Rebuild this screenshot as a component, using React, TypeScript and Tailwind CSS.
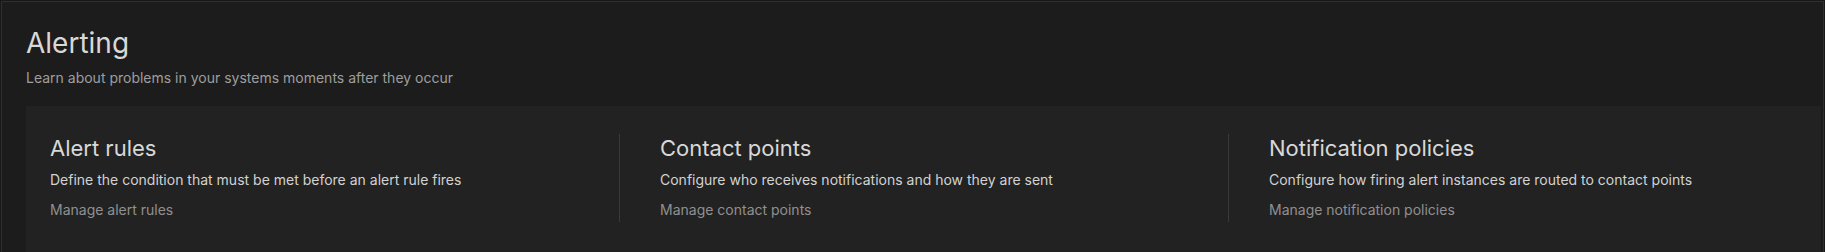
export default function App() {
  const cards = [
    {
      title: "Alert rules",
      desc: "Define the condition that must be met before an alert rule fires",
      link: "Manage alert rules",
      cls: "w-[569px]",
    },
    {
      title: "Contact points",
      desc: "Configure who receives notifications and how they are sent",
      link: "Manage contact points",
      cls: "w-[609px] border-l border-[#3a3a3a] pl-[40px]",
    },
    {
      title: "Notification policies",
      desc: "Configure how firing alert instances are routed to contact points",
      link: "Manage notification policies",
      cls: "flex-1 border-l border-[#3a3a3a] pl-[40px]",
    },
  ];

  return (
    <div className="h-[252px] w-[1825px] overflow-hidden bg-[#181818] font-['Inter',sans-serif]">
      <div className="ml-[1px] mt-[1px] h-[260px] w-[1823px] border border-[#2f2f2f] bg-[#1c1c1c] pl-[24px] pt-[24px]">
        <h1 className="text-[28px] leading-[34px] text-[#d8d8d8]">Alerting</h1>
        <p className="mt-[8px] text-[14px] leading-[20px] text-[#9e9e9e]">
          Learn about problems in your systems moments after they occur
        </p>
        <div className="mt-[18px] flex h-[200px] w-[1795px] bg-[#222222] px-[24px] pt-[28px]">
          {cards.map((c) => (
            <div key={c.title} className={c.cls + " self-start pb-[2px]"}>
              <h2 className="text-[22px] leading-[28px] text-[#d8d8d8]">{c.title}</h2>
              <p className="mt-[8px] text-[14px] leading-[20px] text-[#d2d2d2]">{c.desc}</p>
              <a className="mt-[10px] block text-[14px] leading-[20px] text-[#909090]">{c.link}</a>
            </div>
          ))}
        </div>
      </div>
    </div>
  );
}
